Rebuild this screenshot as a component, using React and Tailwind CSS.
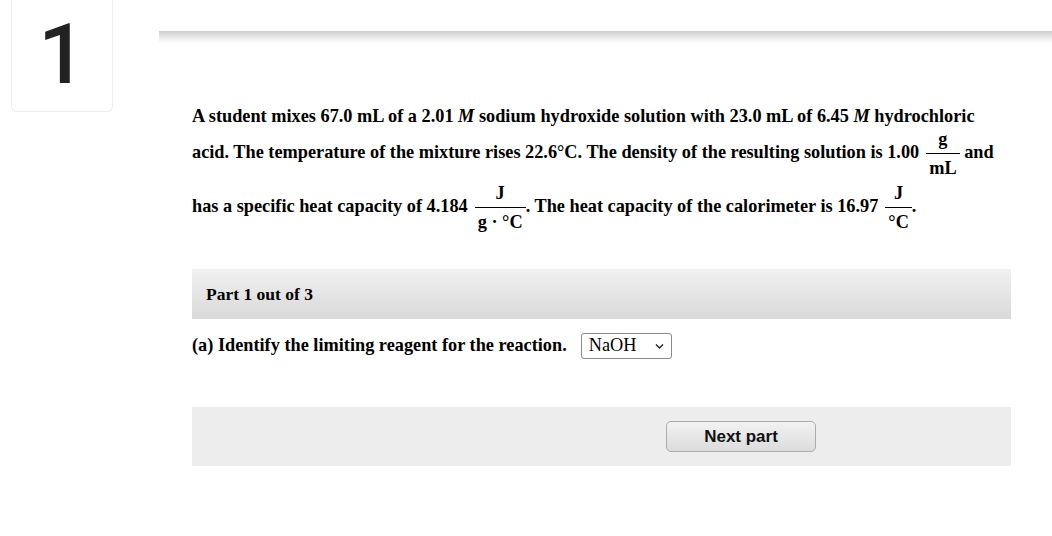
import React from 'react'

function Frac({ top, bottom }) {
  return (
    <span className="inline-flex flex-col items-center align-middle -my-[12px] ml-[7px] leading-[20px]">
      <span className="px-[3px] pb-[4px]">{top}</span>
      <span className="w-full border-t-[1.5px] border-black"></span>
      <span className="px-[3px] pt-[4px]">{bottom}</span>
    </span>
  )
}

export default function App() {
  return (
    <div className="flex min-h-[536px] bg-white text-black">
      <div className="w-[159px] shrink-0">
        <div className="ml-[11px] w-[102px] h-[112px] rounded-b-md border border-t-0 border-[#ededed] flex items-center justify-center">
          <span className="text-[84px] leading-none text-[#222] font-['Roboto',sans-serif] font-medium pb-[2px]">1</span>
        </div>
      </div>
      <div className="flex-1">
        <div className="mt-[31px] h-[12px] bg-gradient-to-b from-[#cfcfcf] to-white"></div>
        <div className="ml-[33px] w-[819px] font-['Liberation_Serif',serif] font-bold text-[18.3px]">
          <div className="mt-[55px] whitespace-nowrap">
            <div className="leading-[36px]">
              A student mixes 67.0 mL of a 2.01 <i>M</i> sodium hydroxide solution with 23.0 mL of 6.45 <i>M</i> hydrochloric
            </div>
            <div className="leading-[36px]">
              acid. The temperature of the mixture rises 22.6°C. The density of the resulting solution is 1.00
              <Frac top="g" bottom="mL" /> and
            </div>
            <div className="leading-[36px] mt-[18px]">
              has a specific heat capacity of 4.184
              <Frac top="J" bottom="g · °C" />. The heat capacity of the calorimeter is 16.97
              <Frac top="J" bottom="°C" />.
            </div>
          </div>
          <div className="mt-[45px] h-[50px] flex items-center px-[14px] text-[17.5px] bg-gradient-to-b from-[#f1f1f1] to-[#d9d9d9]">
            Part 1 out of 3
          </div>
          <div className="mt-[13px] flex items-center h-[27px]">
            <span>(a) Identify the limiting reagent for the reaction.</span>
            <span className="ml-[14px] w-[91px] h-[26px] border border-[#8a8a8a] rounded-[3px] flex items-center justify-between pl-[7px] pr-[6px] font-normal">
              <span>NaOH</span>
              <svg width="11" height="10" viewBox="0 0 11 10" fill="none" stroke="#222" strokeWidth="1.4">
                <path d="M2 3.5 L5.5 7 L9 3.5" />
              </svg>
            </span>
          </div>
          <div className="mt-[48px] h-[59px] bg-[#ededed] flex items-center">
            <button className="ml-[474px] w-[150px] h-[31px] rounded-[5px] border border-[#aaa] bg-gradient-to-b from-[#f2f2f2] to-[#dcdcdc] font-['Liberation_Sans',sans-serif] font-bold text-[17px] text-[#111]">
              Next part
            </button>
          </div>
        </div>
      </div>
    </div>
  )
}
